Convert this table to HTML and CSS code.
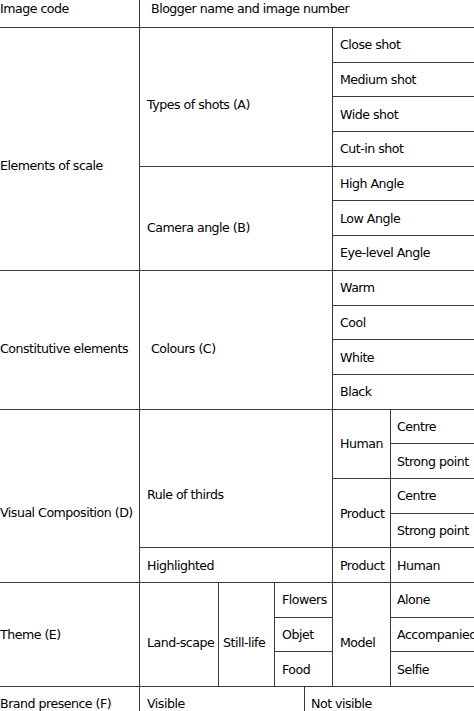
FILE: index.html
```html
<!DOCTYPE html>
<html>
<head>
<meta charset="utf-8">
<link rel="stylesheet" href="styles.css">
</head>
<body>
<div class="table">
  <div class="c hdr-code">Image code</div>
  <div class="c hdr-blogger">Blogger name and image number</div>

  <div class="c cat scale">Elements of scale</div>
  <div class="c sub shots">Types of shots (A)</div>
  <div class="c leaf r2">Close shot</div>
  <div class="c leaf r3">Medium shot</div>
  <div class="c leaf r4">Wide shot</div>
  <div class="c leaf r5">Cut-in shot</div>
  <div class="c sub angle">Camera angle (B)</div>
  <div class="c leaf r6">High Angle</div>
  <div class="c leaf r7">Low Angle</div>
  <div class="c leaf r8">Eye-level Angle</div>

  <div class="c cat constitutive">Constitutive elements</div>
  <div class="c sub colours">Colours (C)</div>
  <div class="c leaf r9">Warm</div>
  <div class="c leaf r10">Cool</div>
  <div class="c leaf r11">White</div>
  <div class="c leaf r12">Black</div>

  <div class="c cat visual">Visual Composition (D)</div>
  <div class="c sub thirds">Rule of thirds</div>
  <div class="c mid human">Human</div>
  <div class="c end r13">Centre</div>
  <div class="c end r14">Strong point</div>
  <div class="c mid product">Product</div>
  <div class="c end r15">Centre</div>
  <div class="c end r16">Strong point</div>
  <div class="c sub highlighted">Highlighted</div>
  <div class="c mid r17">Product</div>
  <div class="c end r17">Human</div>

  <div class="c cat theme">Theme (E)</div>
  <div class="c landscape">Land-scape</div>
  <div class="c stilllife">Still-life</div>
  <div class="c item r18">Flowers</div>
  <div class="c item r19">Objet</div>
  <div class="c item r20">Food</div>
  <div class="c mid model">Model</div>
  <div class="c end r18">Alone</div>
  <div class="c end r19">Accompanied</div>
  <div class="c end r20">Selfie</div>

  <div class="c cat brand">Brand presence (F)</div>
  <div class="c visible">Visible</div>
  <div class="c notvisible">Not visible</div>
</div>
</body>
</html>
```
FILE: styles.css
```css
html, body {
  margin: 0;
  padding: 0;
  background: #fff;
  overflow: hidden;
}

body {
  font-family: "DejaVu Sans", "Liberation Sans", sans-serif;
  font-size: 12.6px;
  letter-spacing: -0.5px;
  color: #000;
}

.table {
  display: grid;
  grid-template-columns: 140px 78px 55px 29px 27px 57px 100px;
  grid-template-rows: 27px repeat(20, 33.7px);
  gap: 1px;
  background: #3a3a3a;
  margin-left: -1px;
  width: max-content;
}

.c {
  background: #fff;
  display: flex;
  align-items: center;
  white-space: nowrap;
  overflow: hidden;
  line-height: 15px;
  padding-left: 6px;
}

/* header */
.hdr-code {
  grid-column: 1;
  grid-row: 1;
  padding-left: 1px;
  align-items: flex-start;
  padding-top: 1px;
}
.hdr-blogger {
  grid-column: 2 / 8;
  grid-row: 1;
  padding-left: 11px;
  align-items: flex-start;
  padding-top: 1px;
}

/* first column categories */
.cat { grid-column: 1; padding-left: 1px; }
.scale { grid-row: 2 / 9; padding-top: 33px; }
.constitutive { grid-row: 9 / 13; padding-top: 18px; }
.visual { grid-row: 13 / 18; padding-top: 33px; }
.theme { grid-row: 18 / 21; }
.brand { grid-row: 21; }

/* second column */
.sub { grid-column: 2 / 6; padding-left: 7px; }
.shots { grid-row: 2 / 6; padding-top: 16px; }
.angle { grid-row: 6 / 9; padding-top: 18px; }
.colours { grid-row: 9 / 13; padding-top: 18px; padding-left: 11px; }
.thirds { grid-row: 13 / 17; padding-top: 32px; }
.highlighted { grid-row: 17; }

.landscape { grid-column: 2; grid-row: 18 / 21; padding-left: 7px; padding-top: 16px; }
.stilllife { grid-column: 3; grid-row: 18 / 21; padding-left: 4px; padding-top: 16px; }
.item { grid-column: 4 / 6; padding-left: 7px; }

.visible { grid-column: 2 / 5; grid-row: 21; padding-left: 7px; }
.notvisible { grid-column: 5 / 8; grid-row: 21; padding-left: 6px; }

/* leaf column (spans last two tracks) */
.leaf { grid-column: 6 / 8; padding-left: 7px; }
.mid { grid-column: 6; padding-left: 7px; }
.end { grid-column: 7; padding-left: 6px; }

.human { grid-row: 13 / 15; }
.product { grid-row: 15 / 17; }
.model { grid-row: 18 / 21; padding-top: 16px; }

.r2 { grid-row: 2; }
.r3 { grid-row: 3; }
.r4 { grid-row: 4; }
.r5 { grid-row: 5; }
.r6 { grid-row: 6; }
.r7 { grid-row: 7; }
.r8 { grid-row: 8; }
.r9 { grid-row: 9; }
.r10 { grid-row: 10; }
.r11 { grid-row: 11; }
.r12 { grid-row: 12; }
.r13 { grid-row: 13; }
.r14 { grid-row: 14; }
.r15 { grid-row: 15; }
.r16 { grid-row: 16; }
.r17 { grid-row: 17; }
.r18 { grid-row: 18; }
.r19 { grid-row: 19; }
.r20 { grid-row: 20; }
```
